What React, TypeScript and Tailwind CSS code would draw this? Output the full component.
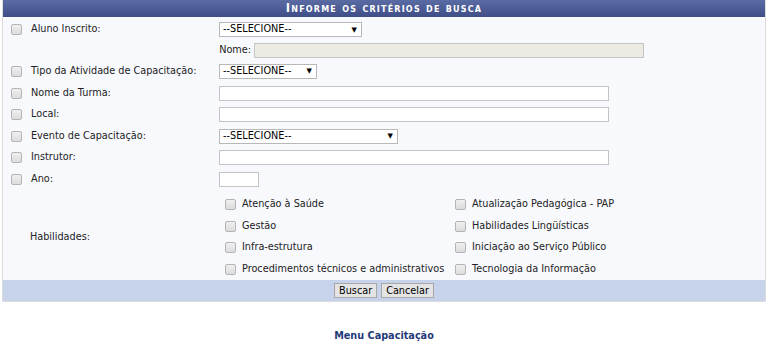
const font = { fontFamily: '"DejaVu Sans", Verdana, sans-serif' };

function Check() {
  return (
    <span className="inline-block w-[11px] h-[11px] rounded-[2px] border border-[#b4b4b4] bg-gradient-to-b from-[#f0f0f0] to-[#dcdcdc] shrink-0" />
  );
}

function Select({ width }: { width: string }) {
  return (
    <div className={`${width} h-[15px] border border-[#b8b8b8] bg-white flex items-center justify-between pl-[3px] pr-[4px] text-black`}>
      <span>--SELECIONE--</span>
      <span className="text-[7px]">▼</span>
    </div>
  );
}

function Input({ width, disabled }: { width: string; disabled?: boolean }) {
  return (
    <div className={`${width} h-[15px] border border-[#c4c4c4] ${disabled ? 'bg-[#ebebe4]' : 'bg-white'}`} />
  );
}

function Row({ label, children, h = 'h-[21.5px]' }: { label: string; children: React.ReactNode; h?: string }) {
  return (
    <div className={`flex items-center ${h}`}>
      <div className="w-[216px] flex items-center gap-[9px] pl-[8px]">
        <Check />
        <span>{label}</span>
      </div>
      {children}
    </div>
  );
}

const habilidades = [
  ['Atenção à Saúde', 'Atualização Pedagógica - PAP'],
  ['Gestão', 'Habilidades Lingüísticas'],
  ['Infra-estrutura', 'Iniciação ao Serviço Público'],
  ['Procedimentos técnicos e administrativos', 'Tecnologia da Informação'],
];

export default function App() {
  return (
    <div className="w-[768px] h-[343px] bg-white text-[9.7px] text-[#222]" style={font}>
      <div className="ml-[2px] w-[764px] border border-[#dcdcdc] border-t-0">
        <div className="h-[17px] bg-gradient-to-b from-[#5b6ba3] to-[#3f4e87] flex items-center justify-center text-white font-bold text-[11.5px] tracking-[1.2px] [font-variant:small-caps]">
          Informe os critérios de busca
        </div>
        <div className="bg-[#f8f9fd] pt-[2px]">
          <Row label="Aluno Inscrito:" h="h-[21.5px]">
            <Select width="w-[143px]" />
          </Row>
          <div className="flex items-center h-[20px]">
            <div className="w-[251px] text-right pr-[3px]">Nome:</div>
            <Input width="w-[390px]" disabled />
          </div>
          <Row label="Tipo da Atividade de Capacitação:" h="h-[22px]">
            <Select width="w-[98px]" />
          </Row>
          <Row label="Nome da Turma:">
            <Input width="w-[390px]" />
          </Row>
          <Row label="Local:">
            <Input width="w-[390px]" />
          </Row>
          <Row label="Evento de Capacitação:">
            <Select width="w-[179px]" />
          </Row>
          <Row label="Instrutor:">
            <Input width="w-[390px]" />
          </Row>
          <Row label="Ano:">
            <Input width="w-[40px]" />
          </Row>
          <div className="flex items-center pt-[4px]">
            <div className="w-[216px] pl-[27px]">Habilidades:</div>
            <div className="flex flex-col">
              {habilidades.map(([a, b]) => (
                <div key={a} className="flex items-center h-[21.5px]">
                  <div className="w-[236px] flex items-center gap-[6px] pl-[6px]">
                    <Check />
                    <span className="whitespace-nowrap">{a}</span>
                  </div>
                  <div className="flex items-center gap-[6px]">
                    <Check />
                    <span>{b}</span>
                  </div>
                </div>
              ))}
            </div>
          </div>
        </div>
        <div className="h-[21px] bg-[#c6d3ea] flex items-center justify-center gap-[4px]">
          <button className="h-[15px] px-[4px] bg-[#e4e4e4] border border-[#a8a8a8] text-black leading-none">Buscar</button>
          <button className="h-[15px] px-[4px] bg-[#e4e4e4] border border-[#a8a8a8] text-black leading-none">Cancelar</button>
        </div>
      </div>
      <div className="mt-[27px] text-center font-bold text-[#1f3a7a]">Menu Capacitação</div>
    </div>
  );
}
